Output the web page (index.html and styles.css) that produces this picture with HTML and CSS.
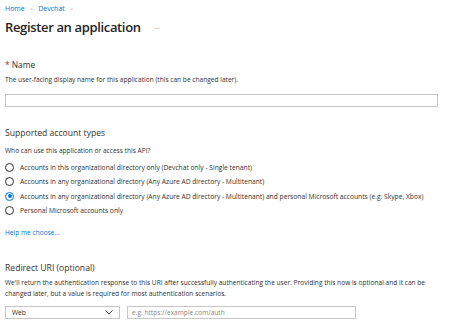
FILE: index.html
```html
<!DOCTYPE html>
<html>
<head>
<meta charset="utf-8">
<link rel="stylesheet" href="styles.css">
</head>
<body>
<div class="page">
  <nav class="crumbs">
    <a class="crumb">Home</a><span class="sep">&gt;</span><a class="crumb">Devchat</a><span class="sep">&gt;</span>
  </nav>
  <div class="title-row">
    <h1 class="title">Register an application</h1>
    <span class="more">···</span>
  </div>

  <div class="label"><span class="req">*</span> Name</div>
  <div class="desc">The user-facing display name for this application (this can be changed later).</div>
  <div class="text-input wide"></div>

  <div class="section-title">Supported account types</div>
  <div class="desc q">Who can use this application or access this API?</div>
  <div class="radios">
    <div class="radio-row"><span class="radio"></span><span>Accounts in this organizational directory only (Devchat only - Single tenant)</span></div>
    <div class="radio-row"><span class="radio"></span><span>Accounts in any organizational directory (Any Azure AD directory - Multitenant)</span></div>
    <div class="radio-row"><span class="radio checked"></span><span>Accounts in any organizational directory (Any Azure AD directory - Multitenant) and personal Microsoft accounts (e.g. Skype, Xbox)</span></div>
    <div class="radio-row"><span class="radio"></span><span>Personal Microsoft accounts only</span></div>
  </div>
  <a class="help">Help me choose...</a>

  <div class="section-title redirect">Redirect URI (optional)</div>
  <div class="desc two">We'll return the authentication response to this URI after successfully authenticating the user. Providing this now is optional and it can be changed later, but a value is required for most authentication scenarios.</div>
  <div class="uri-row">
    <div class="select"><span>Web</span>
      <svg class="chev" width="8" height="5" viewBox="0 0 8 5"><path d="M0.5 0.5 L4 4 L7.5 0.5" fill="none" stroke="#323130" stroke-width="0.9"/></svg>
    </div>
    <div class="text-input uri"><span class="ph">e.g. https://example.com/auth</span></div>
  </div>
</div>
</body>
</html>
```
FILE: styles.css
```css
* { box-sizing: border-box; }
html, body { margin: 0; padding: 0; background: #fff; }
body {
  font-family: "Open Sans", "Noto Sans", sans-serif;
  color: #323130;
}
.page {
  padding: 3px 0 0 5px;
  display: flex;
  flex-direction: column;
  align-items: flex-start;
}
.crumbs {
  font-size: 7px;
  line-height: 12px;
  height: 12px;
  display: flex;
  align-items: center;
}
.crumb { color: #0078d4; }
.sep { color: #a19f9d; margin: 0 5px; font-size: 6px; }
.title-row {
  display: flex;
  align-items: center;
  margin-top: 2px;
  height: 20px;
}
.title {
  margin: 0;
  font-size: 13px;
  line-height: 20px;
  font-weight: 600;
  letter-spacing: -0.35px;
  color: #242424;
}
.more {
  margin-left: 13px;
  font-size: 8px;
  color: #8a8886;
  margin-top: 1px;
}
.label {
  margin-top: 21px;
  font-size: 8.4px;
  line-height: 14px;
}
.req { color: #a4262c; }
.desc {
  font-size: 6.6px;
  line-height: 10px;
  margin-top: 3px;
}
.text-input {
  border: 1px solid #c8c6c4;
  height: 13px;
  background: #fff;
}
.wide { width: 433px; margin-top: 9px; }
.section-title {
  margin-top: 19px;
  font-size: 8.6px;
  line-height: 14px;
}
.desc.q { margin-top: 6px; }
.radios {
  margin-top: 4px;
  display: flex;
  flex-direction: column;
}
.radio-row {
  height: 14.5px;
  display: flex;
  align-items: center;
  font-size: 6.7px;
}
.radio {
  width: 9px;
  height: 9px;
  border: 1px solid #323130;
  border-radius: 50%;
  margin-right: 6px;
  flex: none;
  display: flex;
  align-items: center;
  justify-content: center;
}
.radio.checked { border-color: #0078d4; }
.radio.checked::after {
  content: "";
  width: 4px;
  height: 4px;
  border-radius: 50%;
  background: #0078d4;
}
.help {
  margin-top: 10px;
  font-size: 6.6px;
  line-height: 10px;
  color: #0078d4;
}
.section-title.redirect { margin-top: 23px; }
.desc.two {
  margin-top: 1.5px;
  line-height: 11px;
  width: 430px;
}
.uri-row {
  margin-top: 7.5px;
  display: flex;
  gap: 7px;
}
.select {
  width: 115px;
  height: 13px;
  border: 1px solid #c8c6c4;
  display: flex;
  align-items: center;
  justify-content: space-between;
  padding: 0 6px 0 6px;
  font-size: 6.6px;
}
.uri { width: 229px; display: flex; align-items: center; padding-left: 4px; }
.ph { font-size: 6.6px; color: #8a8886; }
```
